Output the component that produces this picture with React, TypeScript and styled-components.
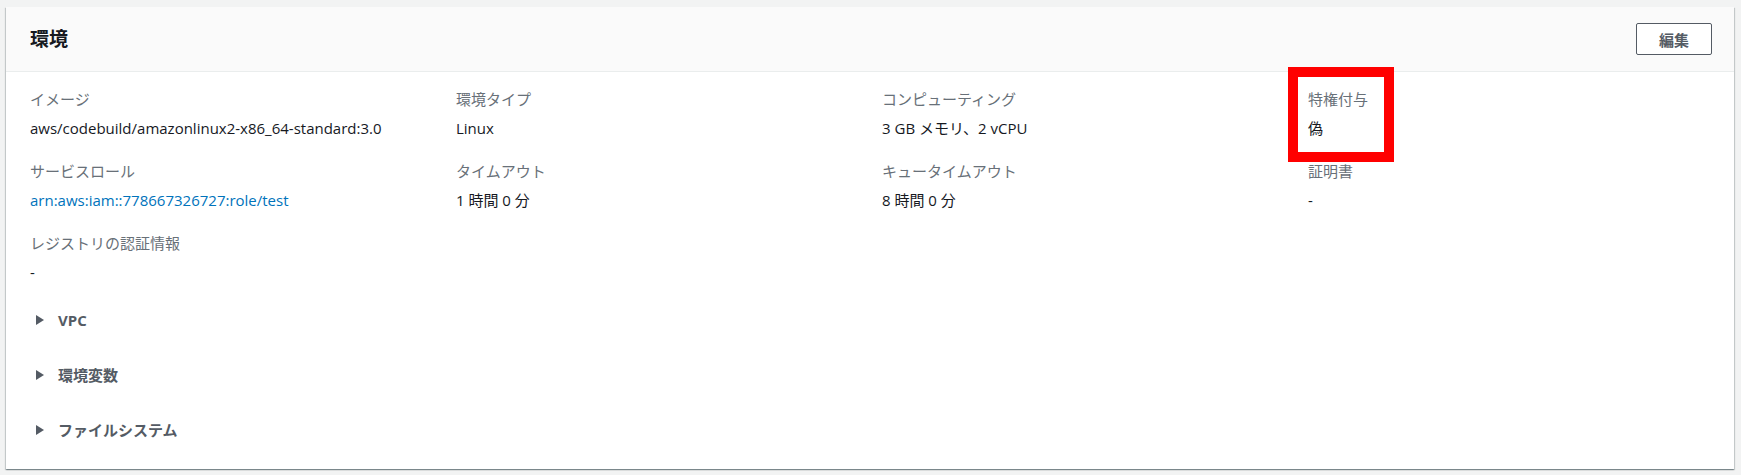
import React from "react";
import styled, { createGlobalStyle } from "styled-components";

const GlobalStyle = createGlobalStyle`
  html, body {
    margin: 0;
    padding: 0;
    background-color: #f2f3f3;
  }
  body {
    font-family: "Open Sans", "Noto Sans CJK JP", sans-serif;
    font-size: 15px;
    color: #16191f;
  }
`;

const Page = styled.div`
  padding: 7px 7px 7px 6px;
  min-height: 475px;
  box-sizing: border-box;
`;

const Panel = styled.section`
  background-color: white;
  box-shadow: 0 1px 1px 0 rgba(0, 28, 36, 0.3),
    1px 1px 1px 0 rgba(0, 28, 36, 0.15), -1px 1px 1px 0 rgba(0, 28, 36, 0.15);
`;

const PanelHeader = styled.header`
  height: 64px;
  display: flex;
  justify-content: space-between;
  align-items: center;
  padding: 0 22px 0 24px;
  background-color: #fafafa;
  border-bottom: 1px solid #eaeded;
  h2 {
    margin: 0;
    font-size: 19px;
    font-weight: 700;
    line-height: 22px;
    color: #16191f;
  }
`;

const EditButton = styled.button`
  height: 32px;
  padding: 0 22px;
  border: 1px solid #545b64;
  border-radius: 2px;
  background-color: white;
  font-family: inherit;
  font-size: 15px;
  font-weight: 700;
  color: #545b64;
  cursor: pointer;
  &:hover {
    background-color: #fafafa;
  }
`;

const PanelBody = styled.div`
  padding: 16px 24px 28px;
`;

const DetailGrid = styled.div`
  display: grid;
  grid-template-columns: repeat(4, 1fr);
  column-gap: 24px;
  row-gap: 21px;
`;

const Detail = styled.div`
  position: relative;
  display: flex;
  flex-direction: column;
  gap: 7px;
  line-height: 22px;
`;

const Label = styled.div`
  color: #687078;
`;

const Value = styled.div`
  color: #16191f;
  a {
    color: #0073bb;
    text-decoration: none;
  }
`;

const Highlight = styled.div`
  position: absolute;
  left: -20px;
  top: -21px;
  width: 106px;
  height: 95px;
  box-sizing: border-box;
  border: 10px solid #ff0000;
  pointer-events: none;
`;

const ExpandList = styled.div`
  margin-top: 26px;
  display: flex;
  flex-direction: column;
  gap: 33px;
`;

const ExpandRow = styled.div`
  display: flex;
  align-items: center;
  gap: 14px;
  padding-left: 6px;
  line-height: 22px;
  font-weight: 700;
  color: #545b64;
  cursor: pointer;
`;

const Caret = () => (
  <svg width="8" height="10" viewBox="0 0 8 10">
    <path d="M0 0 L8 5 L0 10 Z" fill="#545b64" />
  </svg>
);

type Item = { label: string; value: React.ReactNode; marked?: boolean };

const items: Item[] = [
  { label: "イメージ", value: "aws/codebuild/amazonlinux2-x86_64-standard:3.0" },
  { label: "環境タイプ", value: "Linux" },
  { label: "コンピューティング", value: "3 GB メモリ、2 vCPU" },
  { label: "特権付与", value: "偽", marked: true },
  {
    label: "サービスロール",
    value: <a href="#">arn:aws:iam::778667326727:role/test</a>,
  },
  { label: "タイムアウト", value: "1 時間 0 分" },
  { label: "キュータイムアウト", value: "8 時間 0 分" },
  { label: "証明書", value: "-" },
  { label: "レジストリの認証情報", value: "-" },
];

const sections = ["VPC", "環境変数", "ファイルシステム"];

export default function App() {
  return (
    <Page>
      <GlobalStyle />
      <Panel>
        <PanelHeader>
          <h2>環境</h2>
          <EditButton type="button">編集</EditButton>
        </PanelHeader>
        <PanelBody>
          <DetailGrid>
            {items.map((item) => (
              <Detail key={item.label}>
                {item.marked && <Highlight />}
                <Label>{item.label}</Label>
                <Value>{item.value}</Value>
              </Detail>
            ))}
          </DetailGrid>
          <ExpandList>
            {sections.map((s) => (
              <ExpandRow key={s}>
                <Caret />
                {s}
              </ExpandRow>
            ))}
          </ExpandList>
        </PanelBody>
      </Panel>
    </Page>
  );
}
